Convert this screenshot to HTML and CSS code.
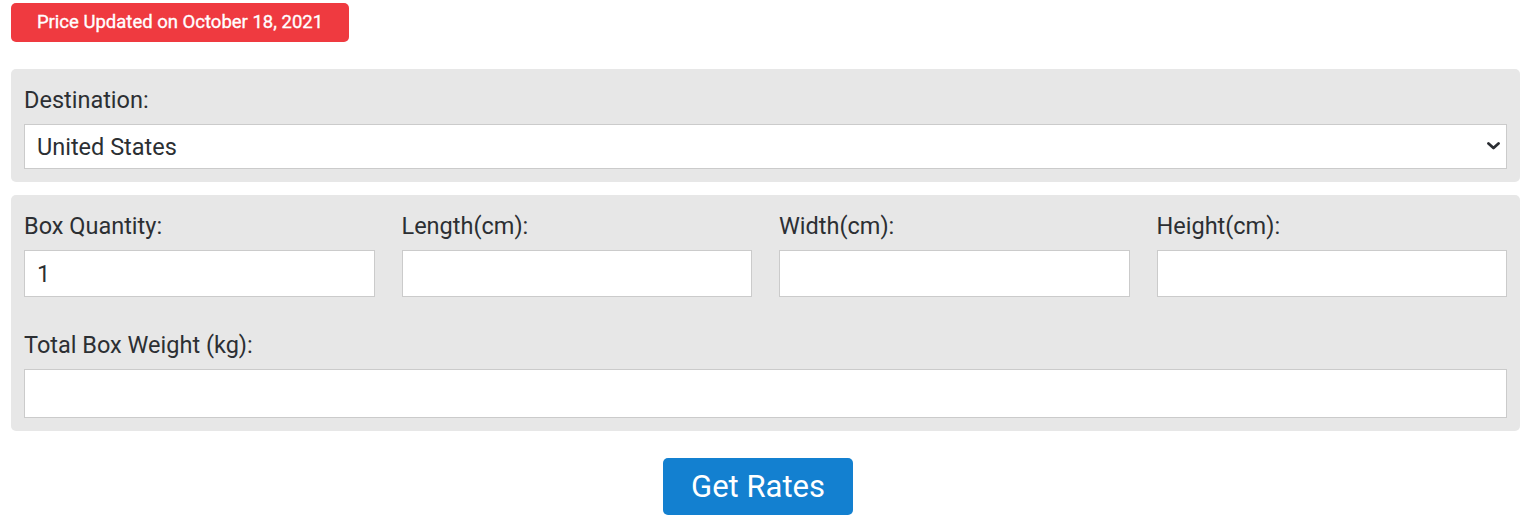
FILE: index.html
```html
<!DOCTYPE html>
<html>
<head>
<meta charset="utf-8">
<link rel="stylesheet" href="styles.css">
</head>
<body>
<div class="wrap">
  <div class="badge">Price Updated on October 18, 2021</div>
  <div class="panel">
    <label class="lbl">Destination:</label>
    <div class="select-wrap">
      <select class="field select">
        <option>United States</option>
      </select>
      <svg class="chev" width="13" height="8" viewBox="0 0 13 8"><path d="M1.5 1.5 L6.5 6 L11.5 1.5" fill="none" stroke="#2b2e33" stroke-width="2.8" stroke-linecap="round" stroke-linejoin="round"/></svg>
    </div>
  </div>
  <div class="panel">
    <div class="grid4">
      <div class="col"><label class="lbl">Box Quantity:</label><input class="field" type="text" value="1"></div>
      <div class="col"><label class="lbl">Length(cm):</label><input class="field" type="text"></div>
      <div class="col"><label class="lbl">Width(cm):</label><input class="field" type="text"></div>
      <div class="col"><label class="lbl">Height(cm):</label><input class="field" type="text"></div>
    </div>
    <div class="row2">
      <label class="lbl">Total Box Weight (kg):</label>
      <input class="field tall" type="text">
    </div>
  </div>
  <div class="actions">
    <button class="btn">Get Rates</button>
  </div>
</div>
</body>
</html>
```
FILE: styles.css
```css
html, body { margin: 0; padding: 0; background: #fff; }
body { font-family: Roboto, "Liberation Sans", sans-serif; color: #2c2f33; }
.wrap { margin-left: 11px; width: 1509px; padding-top: 3px; }
.badge {
  width: 338px; height: 39px; box-sizing: border-box;
  background: #ef3a40; color: #fff; border-radius: 5px;
  font-size: 18.5px; font-weight: 400; line-height: 39px; text-align: center;
  -webkit-text-stroke: 0.35px #fff;
  margin-bottom: 27px;
}
.panel {
  background: #e7e7e7; border-radius: 5px;
  padding: 13px 13px 13px 13px; margin-bottom: 13px;
}
.panel:first-of-type { padding-bottom: 14px; }
.lbl {
  display: block; font-size: 23.5px; line-height: 30px;
  padding-top: 3px; margin-bottom: 9px; color: #2c2f33;
}
.field {
  display: block; width: 100%; box-sizing: border-box;
  height: 47px; border: 1px solid #cbcbcb; background: #fff;
  font-family: Roboto, "Liberation Sans", sans-serif; font-size: 23.5px;
  color: #2c2f33; padding: 0 12px; margin: 0; border-radius: 0; outline: none;
}
.select-wrap { position: relative; }
.select { appearance: none; -webkit-appearance: none; height: 45px; }
.chev { position: absolute; right: 7px; top: 18px; pointer-events: none; }
.grid4 { display: grid; grid-template-columns: repeat(4, 1fr); column-gap: 27px; }
.row2 { padding-top: 30px; }
.tall { height: 49px; }
.actions { display: flex; justify-content: center; padding-right: 15px; padding-top: 14px; }
.btn {
  width: 190px; height: 57px; border: 0; border-radius: 5px;
  background: #1380d0; color: #fff;
  font-family: Roboto, "Liberation Sans", sans-serif; font-size: 31px;
  cursor: pointer; padding: 0;
}
```
